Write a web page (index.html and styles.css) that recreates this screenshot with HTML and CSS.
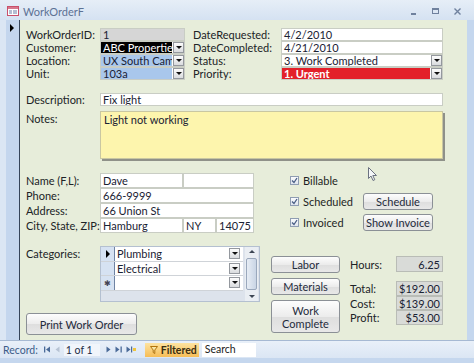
FILE: index.html
```html
<!DOCTYPE html>
<html lang="en">
<head>
    <meta charset="UTF-8">
    <title>WorkOrderF</title>
    <link rel="stylesheet" href="styles.css">
</head>
<body>
<div class="window">
    <div class="titlebar">
        <svg class="appicon" width="12" height="10" viewBox="0 0 12 10">
            <rect x="0.5" y="0.5" width="11" height="9" fill="#fff" stroke="#c9506a"/>
            <rect x="1" y="1" width="10" height="2" fill="#d7788c"/>
            <rect x="2" y="4.5" width="3" height="1" fill="#6a7fa6"/>
            <rect x="6" y="4.5" width="4" height="1" fill="#6a7fa6"/>
            <rect x="2" y="6.5" width="3" height="1" fill="#6a7fa6"/>
            <rect x="6" y="6.5" width="4" height="1" fill="#6a7fa6"/>
        </svg>
        <span class="title">WorkOrderF</span>
        <div class="controls">
            <svg width="9" height="9" viewBox="0 0 9 9"><rect x="2" y="6" width="5" height="2" fill="#6f819e"/></svg>
            <svg width="9" height="9" viewBox="0 0 9 9"><rect x="1.5" y="1.5" width="6" height="5" fill="none" stroke="#6f819e"/><rect x="1" y="1" width="7" height="2" fill="#6f819e"/></svg>
            <svg width="9" height="9" viewBox="0 0 9 9"><path d="M1.5 1.5 L7.5 7.5 M7.5 1.5 L1.5 7.5" stroke="#6f819e" stroke-width="1.4"/></svg>
        </div>
    </div>

    <div class="body">
        <div class="selector"><span class="arrow"></span></div>
        <div class="form">
            <div class="head">
                <span class="lbl">WorkOrderID:</span>
                <div class="field locked">1</div>
                <span class="lbl r">DateRequested:</span>
                <div class="field">4/2/2010</div>

                <span class="lbl">Customer:</span>
                <div class="combo"><span class="text sel">ABC Properties</span><span class="drop"></span></div>
                <span class="lbl r">DateCompleted:</span>
                <div class="field">4/21/2010</div>

                <span class="lbl">Location:</span>
                <div class="combo"><span class="text hl">UX South Campus</span><span class="drop"></span></div>
                <span class="lbl r">Status:</span>
                <div class="combo"><span class="text">3. Work Completed</span><span class="drop"></span></div>

                <span class="lbl">Unit:</span>
                <div class="combo"><span class="text hl">103a</span><span class="drop"></span></div>
                <span class="lbl r">Priority:</span>
                <div class="combo"><span class="text urgent">1. Urgent</span><span class="drop"></span></div>
            </div>

            <div class="line desc">
                <span class="lbl">Description:</span>
                <div class="field wide">Fix light</div>
            </div>
            <div class="line notes">
                <span class="lbl top">Notes:</span>
                <div class="memo">Light not working</div>
            </div>

            <div class="middle">
                <div class="contact">
                    <span class="lbl">Name (F,L):</span>
                    <div class="parts"><div class="field first">Dave</div><div class="field"></div></div>
                    <span class="lbl">Phone:</span>
                    <div class="field">666-9999</div>
                    <span class="lbl">Address:</span>
                    <div class="field">66 Union St</div>
                    <span class="lbl">City, State, ZIP:</span>
                    <div class="parts"><div class="field first">Hamburg</div><div class="field state">NY</div><div class="field zip">14075</div></div>
                </div>
                <div class="flags">
                    <label class="check"><span class="box"><svg width="7" height="7" viewBox="0 0 7 7"><path d="M1 3.5 L3 5.5 L6 1" fill="none" stroke="#4a5f86" stroke-width="1.3"/></svg></span>Billable</label>
                    <span></span>
                    <label class="check"><span class="box"><svg width="7" height="7" viewBox="0 0 7 7"><path d="M1 3.5 L3 5.5 L6 1" fill="none" stroke="#4a5f86" stroke-width="1.3"/></svg></span>Scheduled</label>
                    <button class="btn">Schedule</button>
                    <label class="check"><span class="box"><svg width="7" height="7" viewBox="0 0 7 7"><path d="M1 3.5 L3 5.5 L6 1" fill="none" stroke="#4a5f86" stroke-width="1.3"/></svg></span>Invoiced</label>
                    <button class="btn">Show Invoice</button>
                </div>
            </div>

            <div class="bottom">
                <div class="left">
                    <div class="line cats">
                        <span class="lbl top">Categories:</span>
                        <div class="subform">
                            <div class="rows">
                                <div class="srow"><span class="rs"><span class="arrow"></span></span><span class="cell">Plumbing</span><span class="drop"></span></div>
                                <div class="srow"><span class="rs"></span><span class="cell">Electrical</span><span class="drop"></span></div>
                                <div class="srow"><span class="rs star">&#10033;</span><span class="cell"></span><span class="drop"></span></div>
                            </div>
                            <div class="scroll">
                                <span class="up"></span>
                                <span class="thumb"></span>
                                <span class="down"></span>
                            </div>
                        </div>
                    </div>
                    <button class="btn print">Print Work Order</button>
                </div>
                <div class="right">
                    <div class="actions">
                        <button class="btn">Labor</button>
                        <button class="btn">Materials</button>
                        <button class="btn tall">Work<br>Complete</button>
                    </div>
                    <div class="totals">
                        <span class="lbl">Hours:</span><div class="field num">6.25</div>
                        <span></span><span></span>
                        <span class="lbl">Total:</span><div class="field num">$192.00</div>
                        <span class="lbl">Cost:</span><div class="field num">$139.00</div>
                        <span class="lbl">Profit:</span><div class="field num">$53.00</div>
                    </div>
                </div>
            </div>
        </div>
    </div>

    <div class="statusbar">
        <span class="rec">Record:</span>
        <svg class="nav" width="7" height="7" viewBox="0 0 7 7"><rect x="0" y="0.5" width="1.3" height="6" fill="#4a6a98"/><path d="M6 0.5 L2 3.5 L6 6.5Z" fill="#4a6a98"/></svg>
        <svg class="nav" width="5" height="7" viewBox="0 0 5 7"><path d="M4.5 0.5 L0.5 3.5 L4.5 6.5Z" fill="#b7c3d4"/></svg>
        <span class="pos">1 of 1</span>
        <svg class="nav" width="5" height="7" viewBox="0 0 5 7"><path d="M0.5 0.5 L4.5 3.5 L0.5 6.5Z" fill="#4a6a98"/></svg>
        <svg class="nav" width="7" height="7" viewBox="0 0 7 7"><path d="M0.5 0.5 L4.5 3.5 L0.5 6.5Z" fill="#4a6a98"/><rect x="5.5" y="0.5" width="1.3" height="6" fill="#4a6a98"/></svg>
        <svg class="nav" width="10" height="7" viewBox="0 0 10 7"><path d="M0.5 0.5 L4.5 3.5 L0.5 6.5Z" fill="#4a6a98"/><rect x="5" y="0.5" width="1.2" height="6" fill="#4a6a98"/><rect x="7" y="2" width="3" height="3" fill="#f1c63c"/></svg>
        <span class="filtered"><svg width="8" height="8" viewBox="0 0 8 8"><path d="M0.5 0.5 H7.5 L4.8 4 V7.5 L3.2 6.5 V4Z" fill="#f7e7a8" stroke="#b2730d"/></svg>Filtered</span>
        <span class="search">Search</span>
    </div>

    <svg class="cursor" width="10" height="15" viewBox="0 0 10 15"><path d="M0.5 0.5 L0.5 11.5 L3 9 L5 13.5 L6.8 12.7 L4.8 8.5 L8.5 8.5Z" fill="#f4f6f8" stroke="#6b7280"/></svg>
</div>
</body>
</html>
```

FILE: styles.css
```css
* {
    box-sizing: border-box;
}
body {
    margin: 0;
    font-family: Lato, "Liberation Sans", sans-serif;
    font-size: 11px;
    color: #1d1f24;
}
.window {
    width: 474px;
    height: 363px;
    display: flex;
    flex-direction: column;
    background: #c5d7ee;
    position: relative;
    overflow: hidden;
}
.titlebar {
    height: 20px;
    display: flex;
    align-items: center;
    padding: 2px 0 0 7px;
    background: linear-gradient(#e6eef7, #d5e2f2);
}
.title {
    margin-left: 4px;
    color: #5d7294;
    font-size: 11px;
}
.controls {
    margin-left: auto;
    margin-right: 12px;
    display: flex;
    gap: 13px;
}
.body {
    height: 320px;
    display: flex;
}
.selector {
    width: 20px;
    padding: 4px 0 0 10px;
    background: linear-gradient(to right, #dbe6f4 0 6px, #c4d6ee 6px);
    border-right: 1px solid #34445a;
}
.arrow {
    display: block;
    width: 0;
    height: 0;
    border-top: 4px solid transparent;
    border-bottom: 4px solid transparent;
    border-left: 4px solid #000;
}
.form {
    width: 447px;
    background: #e7edda;
    padding: 8px 0 0 6px;
}
.lbl {
    display: flex;
    align-items: center;
    white-space: nowrap;
    color: #202326;
}
.lbl.top {
    align-items: flex-start;
    padding-top: 1px;
}
.field {
    background: #fff;
    border: 1px solid #c9cdc4;
    padding: 0 2px;
    display: flex;
    align-items: center;
    white-space: nowrap;
    overflow: hidden;
    color: #1a2233;
}
.field.locked {
    background: #d6d6d6;
}
.head {
    display: grid;
    grid-template-columns: 74px 85px 96px 162px;
    grid-auto-rows: 13px;
}
.head .lbl.r {
    padding-left: 8px;
}
.combo {
    display: flex;
    align-items: center;
    background: #fff;
    border: 1px solid #c9cdc4;
}
.combo .text {
    flex: 1;
    height: 100%;
    padding: 0 2px;
    display: flex;
    align-items: center;
    white-space: nowrap;
    overflow: hidden;
    color: #1a2233;
}
.combo .text.sel {
    background: #000;
    color: #fff;
}
.combo .text.hl {
    background: #a9c7ec;
}
.combo .text.urgent {
    background: #e3202a;
    color: #fff;
    font-weight: bold;
}
.drop {
    width: 11px;
    height: 11px;
    margin-left: 1px;
    flex-shrink: 0;
    display: flex;
    align-items: center;
    justify-content: center;
    background: linear-gradient(#fdfdfd, #d9dbde);
    border: 1px solid #94989e;
}
.drop::after {
    content: "";
    border-top: 3px solid #111;
    border-left: 3px solid transparent;
    border-right: 3px solid transparent;
}
.line {
    display: flex;
}
.line .lbl {
    width: 74px;
}
.desc {
    margin-top: 13px;
    height: 13px;
}
.field.wide {
    width: 343px;
}
.notes {
    margin-top: 5px;
    height: 48px;
}
.memo {
    width: 343px;
    background: #fdf5ad;
    border: 1px solid #c9c7a2;
    box-shadow: 2px 2px 0 #8f9189;
    padding: 1px 3px;
    color: #1a2233;
}
.middle {
    margin-top: 14px;
    display: flex;
}
.contact {
    display: grid;
    grid-template-columns: 74px 154px;
    grid-auto-rows: 15px;
}
.parts {
    display: flex;
}
.parts .field {
    flex: 1;
}
.parts .field.first {
    flex: 0 0 83px;
}
.parts .field.state {
    flex: 0 0 33px;
}
.flags {
    margin: -3px 0 0 36px;
    display: grid;
    grid-template-columns: 73px 70px;
    grid-auto-rows: 21px;
    align-items: center;
}
.check {
    display: flex;
    align-items: center;
    gap: 4px;
}
.box {
    width: 9px;
    height: 9px;
    display: flex;
    align-items: center;
    justify-content: center;
    background: linear-gradient(#fafbfd, #dfe5ee);
    border: 1px solid #8f9db2;
}
.btn {
    font-family: inherit;
    font-size: 11px;
    color: #1f2b3c;
    background: linear-gradient(#fdfdfd, #ececec 50%, #dedede 52%, #e8e8e8);
    border: 1px solid #8b9096;
    border-radius: 3px;
    padding: 0;
    height: 17px;
    line-height: 13px;
}
.bottom {
    margin-top: 13px;
    display: flex;
}
.left {
    width: 240px;
}
.cats {
    height: 56px;
}
.subform {
    width: 160px;
    display: flex;
    background: #dde3ec;
    border: 1px solid #b4c0d0;
}
.rows {
    width: 142px;
}
.srow {
    height: 14.5px;
    display: flex;
    align-items: center;
    background: #fff;
    border-bottom: 1px solid #cfd3d8;
}
.rs {
    width: 14px;
    height: 100%;
    display: flex;
    align-items: center;
    justify-content: center;
    background: #d6e2f2;
    border-right: 1px solid #6f83a3;
    font-size: 8px;
    color: #445;
}
.cell {
    flex: 1;
    padding-left: 2px;
    color: #1a2233;
}
.srow .drop {
    margin-right: 3px;
}
.scroll {
    width: 13px;
    margin-left: 2px;
    display: flex;
    flex-direction: column;
    align-items: center;
    background: #eaeef3;
}
.up, .down {
    height: 9px;
    display: flex;
    align-items: center;
}
.up::after {
    content: "";
    border-bottom: 3px solid #3d4654;
    border-left: 3px solid transparent;
    border-right: 3px solid transparent;
}
.down::after {
    content: "";
    border-top: 3px solid #3d4654;
    border-left: 3px solid transparent;
    border-right: 3px solid transparent;
}
.thumb {
    flex: 1;
    width: 11px;
    margin: 2px 0;
    border: 1px solid #9aa8bc;
    border-radius: 2px;
    background: linear-gradient(to right, #e7edf5, #c9d5e5);
}
.btn.print {
    margin-top: 11px;
    width: 111px;
    height: 22px;
}
.right {
    margin: 10px 0 0 5px;
    display: flex;
}
.actions {
    width: 69px;
    display: flex;
    flex-direction: column;
    gap: 5px;
}
.actions .btn {
    height: 17px;
}
.actions .btn.tall {
    height: 33px;
}
.totals {
    margin-left: 10px;
    display: grid;
    grid-template-columns: 46px 47px;
    grid-template-rows: 16px 9px 15px 14px 15px;
}
.field.num {
    justify-content: flex-end;
    background: #d9dbd8;
    border-color: #b9bcb6;
}
.statusbar {
    height: 18px;
    margin-bottom: 5px;
    display: flex;
    align-items: center;
    padding-left: 3px;
    background: linear-gradient(#e9f0f9, #dbe6f4);
    border-top: 1px solid #a6b9d3;
    font-size: 10.5px;
}
.rec {
    color: #3c5c88;
    margin-right: 6px;
}
.nav {
    margin-right: 4px;
}
.pos {
    width: 36px;
    margin-right: 6px;
    padding-left: 2px;
    background: #f1f5fb;
    color: #1d2d48;
}
.filtered {
    margin-left: 5px;
    width: 54px;
    height: 14px;
    display: flex;
    align-items: center;
    gap: 3px;
    padding-left: 5px;
    background: linear-gradient(#fde3a0, #f6bd56);
    color: #3a2e12;
    font-weight: bold;
}
.search {
    margin-left: 3px;
    width: 54px;
    height: 14px;
    padding-left: 3px;
    background: #fff;
    color: #222;
}
.cursor {
    position: absolute;
    left: 368px;
    top: 167px;
}
```
